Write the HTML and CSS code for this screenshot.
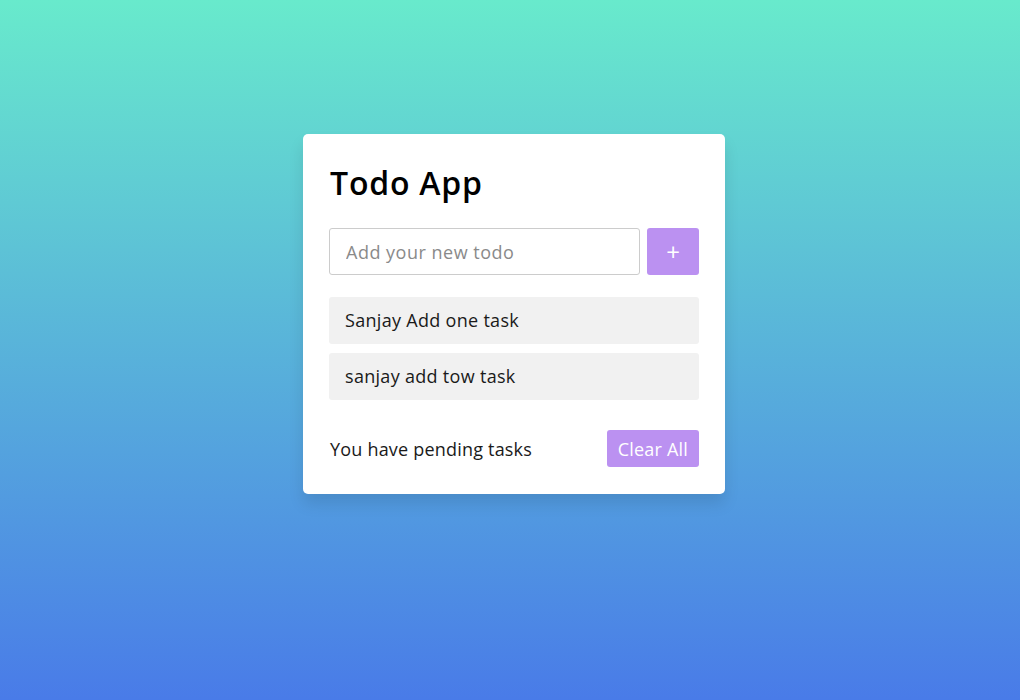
FILE: index.html
```html
<!DOCTYPE html>
<html lang="en">
<head>
<meta charset="UTF-8">
<title>Todo App</title>
<link rel="stylesheet" href="styles.css">
</head>
<body>
<div class="wrapper">
  <header class="title">Todo App</header>
  <div class="input-field">
    <input type="text" placeholder="Add your new todo">
    <button class="add-btn">+</button>
  </div>
  <ul class="todo-list">
    <li>Sanjay Add one task</li>
    <li>sanjay add tow task</li>
  </ul>
  <div class="footer">
    <span class="pending">You have pending tasks</span>
    <button class="clear-btn">Clear All</button>
  </div>
</div>
</body>
</html>
```
FILE: styles.css
```css
* { margin: 0; padding: 0; box-sizing: border-box; }
html, body { height: 100%; }
body {
  font-family: "Open Sans", "Noto Sans", sans-serif;
  background: linear-gradient(to bottom, #68EACC 0%, #497BE8 100%);
  display: flex;
  justify-content: center;
  align-items: flex-start;
  padding-left: 8px;
}
.wrapper {
  margin-top: 134px;
  width: 422px;
  background: #fff;
  border-radius: 5px;
  padding: 26px 26px 27px 26px;
  box-shadow: 0 10px 15px rgba(0,0,0,0.1);
}
.title {
  font-size: 32px;
  font-weight: 600;
  letter-spacing: 0.8px;
  color: #000;
  line-height: 46px;
  margin-left: 1px;
}
.input-field {
  display: flex;
  gap: 7px;
  margin: 22px 0 22px;
  height: 47px;
}
.input-field input {
  flex: 1;
  height: 100%;
  border: 1px solid #ccc;
  border-radius: 3px;
  font-family: inherit;
  font-size: 18px;
  letter-spacing: 0.5px;
  padding-left: 16px;
  outline: none;
  color: #333;
}
.input-field input::placeholder { color: #8a8a8a; }
.add-btn {
  width: 52px;
  height: 100%;
  border: none;
  border-radius: 3px;
  background: #8E49E8;
  opacity: 0.6;
  color: #fff;
  font-size: 24px;
  font-family: inherit;
}
.todo-list { list-style: none; }
.todo-list li {
  height: 47px;
  line-height: 47px;
  background: #f1f1f1;
  border-radius: 3px;
  padding: 0 16px;
  margin-bottom: 9px;
  font-size: 18px;
  letter-spacing: 0.3px;
  color: #1a1a1a;
}
.footer {
  display: flex;
  align-items: center;
  justify-content: space-between;
  margin-top: 30px;
}
.pending {
  font-size: 18px;
  letter-spacing: 0.2px;
  color: #1a1a1a;
  margin-left: 1px;
}
.clear-btn {
  height: 37px;
  padding: 0 11px;
  border: none;
  border-radius: 3px;
  background: #8E49E8;
  opacity: 0.6;
  color: #fff;
  font-family: inherit;
  font-size: 18px;
  letter-spacing: 0.2px;
}
```
